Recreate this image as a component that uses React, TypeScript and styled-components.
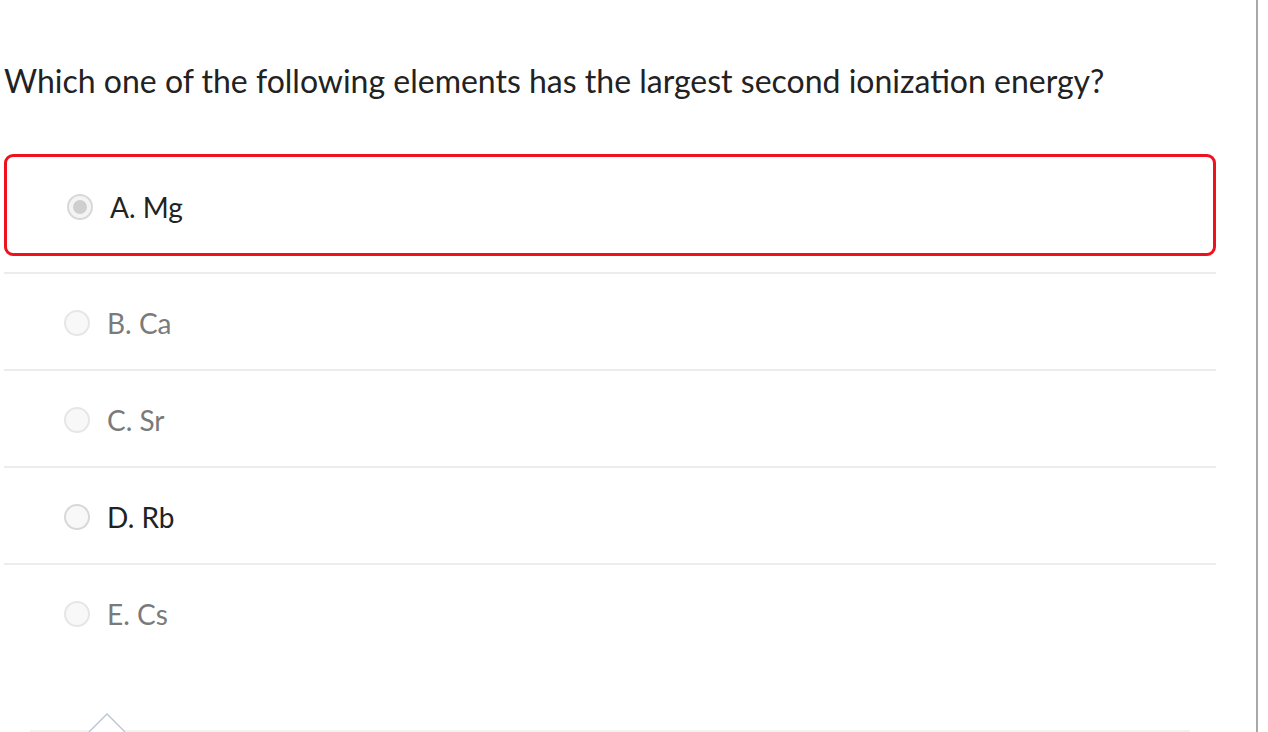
import React from "react";
import styled, { createGlobalStyle, css } from "styled-components";

const GlobalStyle = createGlobalStyle`
  html, body { margin: 0; padding: 0; background: #ffffff; }
  body { font-family: Lato, "Open Sans", "Noto Sans", sans-serif; }
  * { box-sizing: border-box; }
`;

const Frame = styled.div`
  width: 1258px;
  height: 732px;
  border-right: 2px solid #a9a9a9;
  display: flex;
  flex-direction: column;
  overflow: hidden;
`;

const Content = styled.div`
  width: 1216px;
  padding-left: 4px;
  display: flex;
  flex-direction: column;
`;

const Question = styled.h1`
  margin: 59px 0 0 0;
  font-size: 32px;
  line-height: 44px;
  font-weight: 400;
  color: #222222;
`;

const OptionList = styled.div`
  margin-top: 51px;
  display: flex;
  flex-direction: column;
`;

const SelectedWrap = styled.div`
  padding-bottom: 16px;
  border-bottom: 2px solid #ececec;
`;

const Option = styled.label<{ $selected?: boolean; $last?: boolean }>`
  display: flex;
  align-items: center;
  gap: 17px;
  padding-left: 60px;
  ${(p) =>
    p.$selected
      ? css`
          height: 102px;
          border: 3px solid #f0111f;
          border-radius: 9px;
          padding-top: 4px;
        `
      : css`
          height: 97px;
          padding-top: 2px;
          border-bottom: 2px solid ${p.$last ? "transparent" : "#ececec"};
        `}
`;

const Radio = styled.span<{ $checked?: boolean; $strong?: boolean }>`
  width: 26px;
  height: 26px;
  border-radius: 50%;
  flex-shrink: 0;
  display: flex;
  align-items: center;
  justify-content: center;
  background: ${(p) => (p.$checked ? "#f4f4f4" : "#f8f8f8")};
  border: 2px solid ${(p) => (p.$strong || p.$checked ? "#d8d8d8" : "#e6e6e6")};
  &::after {
    content: "";
    display: ${(p) => (p.$checked ? "block" : "none")};
    width: 14px;
    height: 14px;
    border-radius: 50%;
    background: #cfcfcf;
  }
`;

const OptionText = styled.span<{ $dim?: boolean }>`
  font-size: 28px;
  color: ${(p) => (p.$dim ? "#7a7a7a" : "#222222")};
`;

const Footer = styled.div`
  margin-top: auto;
  margin-left: 30px;
  width: 1160px;
  height: 18px;
  border-bottom: 2px solid #f2f2f2;
  position: relative;
`;

const Caret = styled.svg`
  position: absolute;
  left: 58px;
  bottom: -2px;
`;

const options = [
  { label: "A. Mg", selected: true, dim: false },
  { label: "B. Ca", dim: true },
  { label: "C. Sr", dim: true },
  { label: "D. Rb", dim: false, strong: true },
  { label: "E. Cs", dim: true },
];

export default function App() {
  return (
    <>
      <GlobalStyle />
      <Frame>
        <Content>
          <Question>Which one of the following elements has the largest second ionization energy?</Question>
          <OptionList>
            {options.map((o, i) =>
              o.selected ? (
                <SelectedWrap key={o.label}>
                  <Option $selected>
                    <Radio $checked />
                    <OptionText>{o.label}</OptionText>
                  </Option>
                </SelectedWrap>
              ) : (
                <Option key={o.label} $last={i === options.length - 1}>
                  <Radio $strong={o.strong} />
                  <OptionText $dim={o.dim}>{o.label}</OptionText>
                </Option>
              )
            )}
          </OptionList>
        </Content>
        <Footer>
          <Caret width="38" height="20" viewBox="0 0 38 20">
            <polyline points="1,20 19,2 37,20" fill="#ffffff" stroke="#b9c3cf" strokeWidth="1.3" />
          </Caret>
        </Footer>
      </Frame>
    </>
  );
}
